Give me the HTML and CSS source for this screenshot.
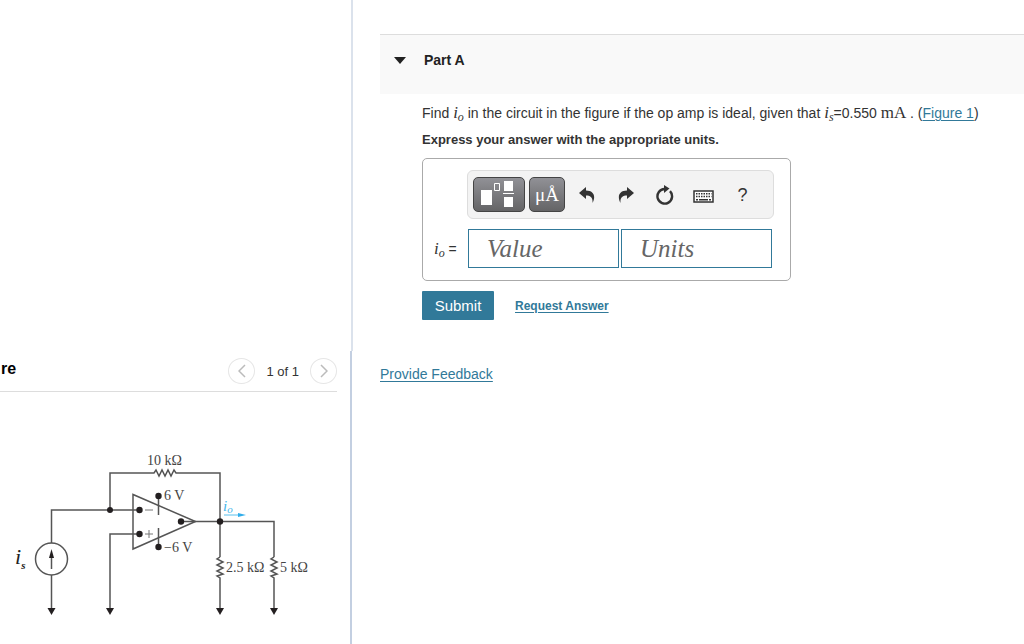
FILE: index.html
```html
<!DOCTYPE html>
<html lang="en">
<head>
<meta charset="utf-8">
<meta name="viewport" content="width=device-width, initial-scale=1">
<title>Part A</title>
<link rel="stylesheet" href="styles.css">
</head>
<body>
<div class="page">
  <aside class="side">
    <div class="side-top"></div>
    <section class="figure-pane">
      <header class="figure-head">
        <h2 class="figure-title">re</h2>
        <nav class="pager" aria-label="Figures">
          <button class="pager-btn" type="button" aria-label="Previous figure">
            <svg width="8" height="14" viewBox="0 0 8 14"><path d="M7 1 1 7l6 6"/></svg>
          </button>
          <span class="pager-count">1 of 1</span>
          <button class="pager-btn" type="button" aria-label="Next figure">
            <svg width="8" height="14" viewBox="0 0 8 14"><path d="M1 1l6 6-6 6"/></svg>
          </button>
        </nav>
      </header>
      <svg class="circuit" width="337" height="180" viewBox="0 440 337 180" role="img" aria-label="Op amp circuit">
        <g class="wire">
          <path d="M51.500 543V510H140"/>
          <path d="M51.500 575V609"/>
          <circle cx="51.500" cy="559" r="16"/>
          <path d="M51.500 569V555"/>
          <path d="M110 510V473H154l2-3 3 6 3-6 3 6 3-6 3 6 3-6 2 3H220V557"/>
          <path d="M110 609V534H140"/>
          <path d="M133 494.500V549L195.500 521.500Z"/>
          <path d="M158.500 496V515M158.500 528V547"/>
          <path d="M181 521.500H274V557"/>
          <path d="M220 557l-3 2 6 3-6 3 6 3-6 3 6 3-6 2 3 2V609"/>
          <path d="M274 557l-3 2 6 3-6 3 6 3-6 3 6 3-6 2 3 2V609"/>
        </g>
        <g class="solid">
          <path d="M51.500 549l2.500 9h-5z"/>
          <path d="M47.500 608h8l-4 7z"/>
          <path d="M106 608h8l-4 7z"/>
          <path d="M216 608h8l-4 7z"/>
          <path d="M270 608h8l-4 7z"/>
          <circle cx="110" cy="510" r="3"/>
          <circle cx="139.500" cy="510" r="3.200"/>
          <circle cx="139.500" cy="534" r="3.200"/>
          <circle cx="158.500" cy="496" r="3.200"/>
          <circle cx="158.500" cy="547" r="3.200"/>
          <circle cx="181" cy="521.500" r="3.200"/>
          <circle cx="220" cy="521.500" r="3.200"/>
        </g>
        <path class="sign" d="M145 510h8M145 534h8M149 530v8"/>
        <g class="flow"><path d="M224 515H239"/><path class="flow-tip" d="M238 513l8 2-8 2z"/></g>
        <g class="label">
          <text x="147" y="465">10 kΩ</text>
          <text x="164" y="500">6 V</text>
          <text x="164" y="552">−6 V</text>
          <text x="226" y="572">2.5 kΩ</text>
          <text x="280" y="572">5 kΩ</text>
        </g>
        <text class="label-out" x="223" y="511">i<tspan class="label-sub" dy="2">o</tspan></text>
        <text class="label-src" x="15" y="564">i<tspan class="label-src-sub" dy="5">s</tspan></text>
      </svg>
    </section>
  </aside>

  <main class="main">
    <header class="part-head">
      <svg class="caret" width="12" height="7" viewBox="0 0 12 7"><path d="M0 0h12L6 7z"/></svg>
      <h1 class="part-title">Part A</h1>
    </header>
    <form class="question">
      <p class="prompt">Find <i class="math">i<sub>o</sub></i> in the circuit in the figure if the op amp is ideal, given that <i class="math">i<sub>s</sub></i>=0.550 <span class="math unit">mA</span> . (<a href="#figure">Figure 1</a>)</p>
      <p class="instruct">Express your answer with the appropriate units.</p>
      <div class="answer">
        <div class="toolbar">
          <button class="tool tool-wide" type="button" aria-label="Templates">
            <svg width="50" height="33" viewBox="1 1 50 33">
              <g fill="#fff"><path d="M8 13h11v15H8zM31 4h9v10h-9zM31 20h9v10h-9zM30 16h11v1H30z"/></g>
              <path d="M21.500 6.500h5v7h-5z" fill="none" stroke="#fff"/>
            </svg>
          </button>
          <button class="tool tool-units" type="button">μÅ</button>
          <button class="icon-btn" type="button" aria-label="Undo">
            <svg width="16" height="18" viewBox="0 0 16 18"><path d="M0 7 7 1v3.500c8 0 10 6 6.500 12.500C14 11.500 11.500 9.500 7 9.500V13z"/></svg>
          </button>
          <button class="icon-btn" type="button" aria-label="Redo">
            <svg width="16" height="18" viewBox="0 0 16 18"><path d="M16 7 9 1v3.500C1 4.500-1 10.500 2.500 17 2 11.500 4.500 9.500 9 9.500V13z"/></svg>
          </button>
          <button class="icon-btn" type="button" aria-label="Reset">
            <svg width="18" height="20" viewBox="0 0 18 20"><path d="M14 6.200A7.300 7.300 0 1 1 8.500 4" fill="none" stroke="#333" stroke-width="2.400"/><path d="M8 0l5.500 3.500L8 8z"/></svg>
          </button>
          <button class="icon-btn keyboard" type="button" aria-label="Keyboard">
            <svg width="21" height="13" viewBox="0 0 21 13"><path d="M1 1h19v11H1z" fill="#fff" stroke="#333" stroke-width="1.500"/><path d="M3 3.800h15.500M3 6.500h15.500" fill="none" stroke="#333" stroke-width="1.500" stroke-dasharray="1.500 1"/><path d="M3 9h2v1.500H3zM6 9h9v1.500H6zM16 9h2v1.500h-2z"/></svg>
          </button>
          <button class="icon-btn help" type="button" aria-label="Help">?</button>
        </div>
        <div class="fields">
          <label class="lhs" for="value"><i class="math">i<sub>o</sub></i> =</label>
          <input class="field" id="value" type="text" placeholder="Value">
          <input class="field" type="text" placeholder="Units" aria-label="Units">
        </div>
      </div>
      <div class="actions">
        <button class="submit" type="submit">Submit</button>
        <a class="request" href="#answer">Request Answer</a>
      </div>
    </form>
    <footer class="foot"><a href="#feedback">Provide Feedback</a></footer>
  </main>
</div>
</body>
</html>
```
FILE: styles.css
```css
* { box-sizing: border-box; }
body {
  margin: 0;
  background: #fff;
  color: #333;
  font: 14px/20px "Liberation Sans", Arial, sans-serif;
}
h1, h2, p { margin: 0; }
a { color: #317999; text-underline-offset: 2px; }
button { font: inherit; padding: 0; border: 0; background: none; cursor: pointer; }
svg { display: block; }

.page { display: grid; grid-template-columns: 353px 1fr; min-height: 100vh; }

/* Left column */
.side { display: flex; flex-direction: column; }
.side-top { height: 351px; border-right: 2px solid #dbe2ec; }
.figure-pane { flex: 1; margin-right: 1px; border-right: 2px solid #c3cfe1; }
.figure-head {
  display: flex;
  justify-content: space-between;
  align-items: center;
  height: 41px;
  margin-right: 13px;
  border-bottom: 1px solid #ddd;
}
.figure-title { padding-left: 1px; padding-bottom: 5px; color: #000; font-size: 16px; }
.pager { display: flex; align-items: center; gap: 11px; padding-bottom: 1px; }
.pager-btn {
  display: grid;
  place-items: center;
  width: 27px;
  height: 26px;
  border: 1px solid #e6e6e6;
  border-radius: 50%;
}
.pager-btn path { fill: none; stroke: #bbb; stroke-width: 1.5; }
.pager-count { padding-top: 3px; font-size: 13px; }
.circuit { margin-top: 48px; }
.wire { fill: none; stroke: #555; stroke-width: 1.5; }
.solid { fill: #231f20; }
.sign { stroke: #777; }
.flow { stroke: #58c0ee; fill: #31adea; }
.flow-tip { stroke: none; }
.label { fill: #444; font: 14px "Liberation Serif", serif; }
.label-out { fill: #45b5ea; font: italic 15px "Liberation Serif", serif; }
.label-sub { font-size: 11px; }
.label-src { fill: #222; font: italic 22px "Liberation Serif", serif; }
.label-src-sub { font-size: 11px; font-weight: bold; }

/* Right column */
.main { padding: 34px 0 0 27px; }
.part-head {
  display: flex;
  align-items: center;
  gap: 18px;
  height: 60px;
  padding: 0 14px 9px;
  border-top: 1px solid #ddd;
  background: #f9f9f9;
}
.caret { fill: #222; }
.part-title { color: #222; font-size: 14px; }
.question { padding: 6px 0 0 42px; }
.prompt, .instruct { font-size: 14px; line-height: 26px; }
.instruct { padding-top: 1px; font-weight: bold; font-size: 13px; }
.math { font-family: "Liberation Serif", serif; font-size: 17px; line-height: 1; }
.math sub { font-size: 12px; line-height: 0; vertical-align: -3px; }
.answer {
  width: fit-content;
  margin-top: 5px;
  padding: 11px 16px 12px 11px;
  border: 1px solid #aaa;
  border-radius: 5px;
}
.toolbar {
  display: flex;
  align-items: center;
  width: 307px;
  height: 49px;
  margin-left: 33px;
  padding: 0 11px 0 5px;
  border: 1px solid #ddd;
  border-radius: 6px;
  background: #f3f3f3;
}
.tool {
  height: 35px;
  margin-right: 4px;
  border: 1px solid #444;
  border-radius: 5px;
  background: linear-gradient(#919196, #646466);
  color: #fff;
}
.tool-wide { display: grid; place-items: center; width: 52px; }
.tool-units { width: 36px; margin-right: 2px; font: 19px "Liberation Serif", serif; }
.icon-btn { display: grid; place-items: center; flex: 1; height: 35px; }
.icon-btn svg { fill: #333; }
.keyboard { padding-top: 3px; }
.help { color: #333; font-size: 18px; }
.fields { display: flex; align-items: center; gap: 2px; margin-top: 10px; }
.lhs { width: 32px; white-space: nowrap; }
.field {
  width: 151px;
  height: 39px;
  padding: 0 18px;
  border: 1px solid #317999;
  background: #fff;
  font: italic 25px "Liberation Serif", serif;
}
.field::placeholder { color: #666; opacity: 1; }
.actions { display: flex; align-items: center; gap: 21px; margin-top: 10px; }
.submit { width: 72px; height: 29px; border-radius: 1px; background: #317999; color: #fff; font-size: 15px; }
.request { font-size: 12px; font-weight: bold; }
.foot { margin-top: 44px; }
```
